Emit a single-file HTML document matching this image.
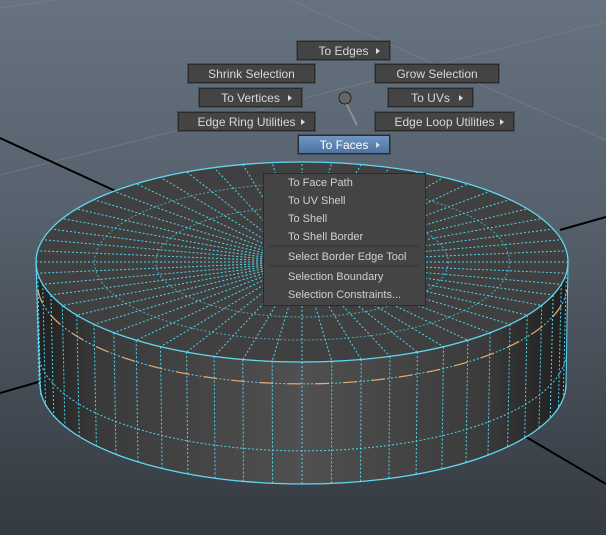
<!DOCTYPE html>
<html><head><meta charset="utf-8"><style>
html,body{margin:0;padding:0}
body{width:606px;height:535px;overflow:hidden;position:relative;background:linear-gradient(#66727f 0%,#56616d 40%,#434a53 75%,#353a41 100%);font-family:"Liberation Sans",sans-serif}
svg{position:absolute;left:0;top:0}
.b{position:absolute;height:17px;background:#444;border:1px solid #2a2a2a;box-shadow:0 0 0 1px rgba(0,0,0,.25);color:#d8d8d8;font-size:12px;line-height:18px;text-align:center;box-sizing:content-box}
.b i{position:absolute;right:9px;top:6px;width:0;height:0;border-left:4px solid #ddd;border-top:3px solid transparent;border-bottom:3px solid transparent}
.sel{background:linear-gradient(#6f95c0,#4f73a0);color:#fff}
.m{position:absolute;left:263px;top:173px;width:161px;height:131px;background:#444;border:1px solid #2a2a2a;color:#d0d0d0;font-size:11px}
.m div{position:absolute;left:24px}
.m hr{position:absolute;left:5px;width:150px;margin:0;border:0;border-top:2px solid #3a3a3a}
</style></head><body>
<svg width="606" height="535" id="s">
<defs>
<linearGradient id="side" x1="0" x2="1">
<stop offset="0" stop-color="#1f1f1f"/><stop offset=".12" stop-color="#3a3a3a"/><stop offset=".5" stop-color="#505050"/><stop offset=".85" stop-color="#3a3a3a"/><stop offset="1" stop-color="#1e1e1e"/>
</linearGradient>
</defs>
<g stroke="#8a8a84" stroke-width="1" opacity=".45" fill="none">
<line x1="0" y1="175" x2="606" y2="22"/><line x1="290" y1="0" x2="606" y2="140"/><line x1="0" y1="8" x2="55" y2="0"/>
</g>
<g stroke="#000" stroke-width="2">
<line x1="0" y1="138" x2="122" y2="194"/><line x1="560" y1="230" x2="606" y2="217"/>
<line x1="0" y1="393" x2="70" y2="373"/><line x1="458" y1="397" x2="606" y2="484"/>
</g>
<path d="M36,262 L40,384 A263,100 0 0 0 566,384 L568,262 Z" fill="url(#side)"/>
<ellipse cx="302" cy="262" rx="266" ry="100" fill="#404040"/>
<g id="w" stroke="#4fd6f0" stroke-width="1" fill="none"></g>
<ellipse cx="302" cy="262" rx="266" ry="100" fill="none" stroke="#5fd8f5" stroke-width="1.3"/>
<path d="M40,384 A263,100 0 0 0 566,384" fill="none" stroke="#5fd8f5" stroke-width="1.3"/>
<line x1="36" y1="262" x2="40" y2="384" stroke="#5fd8f5"/><line x1="568" y1="262" x2="566" y2="384" stroke="#5fd8f5"/>
<line x1="346" y1="103" x2="357" y2="125" stroke="#8a8f95" stroke-width="2"/>
<circle cx="345" cy="98" r="6" fill="#666" stroke="#222" stroke-width="1"/>
</svg>
<script>
var g=document.getElementById('w'),h='',N=56;
for(var i=0;i<N;i++){var a=i/N*2*Math.PI,x=302+266*Math.cos(a),y=262+100*Math.sin(a);
h+='<line x1="302" y1="262" x2="'+x.toFixed(1)+'" y2="'+y.toFixed(1)+'" stroke-dasharray="2 2"/>';
if(Math.sin(a)>0){var x2=302+263*Math.cos(a),y2=384+100*Math.sin(a);h+='<line x1="'+x.toFixed(1)+'" y1="'+y.toFixed(1)+'" x2="'+x2.toFixed(1)+'" y2="'+y2.toFixed(1)+'" stroke-dasharray="2 2"/>';}}
[0.55,0.78].forEach(function(r){h+='<ellipse cx="302" cy="262" rx="'+266*r+'" ry="'+100*r+'" stroke-dasharray="2 2" opacity=".7"/>';});
h+='<path d="M38,290 A265,100 0 0 0 567,290" stroke-dasharray="2 2"/>';
h+='<path d="M39,357 A264,100 0 0 0 566,357" stroke-dasharray="2 2"/>';
h+='<path d="M38,290 A265,100 0 0 0 567,290" stroke="#e8a870" stroke-dasharray="14 14" stroke-width="1.2"/>';
g.innerHTML=h;
</script>
<div class="b" style="left:297px;top:41px;width:91px">To Edges<i></i></div>
<div class="b" style="left:188px;top:64px;width:125px">Shrink Selection</div>
<div class="b" style="left:375px;top:64px;width:122px">Grow Selection</div>
<div class="b" style="left:199px;top:88px;width:101px">To Vertices<i></i></div>
<div class="b" style="left:388px;top:88px;width:83px">To UVs<i></i></div>
<div class="b" style="left:178px;top:112px;width:135px">Edge Ring Utilities<i></i></div>
<div class="b" style="left:375px;top:112px;width:137px">Edge Loop Utilities<i></i></div>
<div class="b sel" style="left:298px;top:135px;width:90px">To Faces<i></i></div>
<div class="m">
<div style="top:3px">To Face Path</div>
<div style="top:21px">To UV Shell</div>
<div style="top:39px">To Shell</div>
<div style="top:57px">To Shell Border</div>
<hr style="top:71px">
<div style="top:77px">Select Border Edge Tool</div>
<hr style="top:91px">
<div style="top:97px">Selection Boundary</div>
<div style="top:115px">Selection Constraints...</div>
</div>
</body></html>
